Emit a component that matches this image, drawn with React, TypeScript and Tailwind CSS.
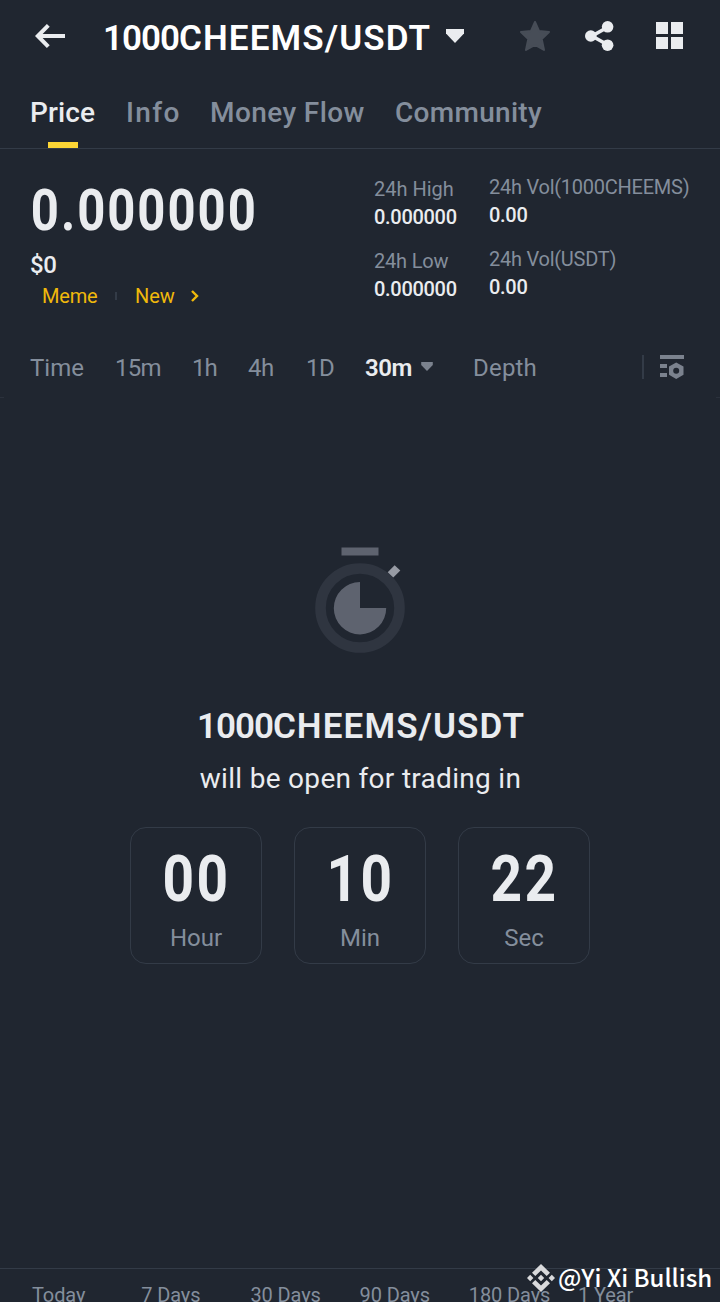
import type { ReactNode } from "react";

const TABS = [
  { label: "Price", box: "w-[96px]", text: "w-[66px] tracking-[0.1px]", active: true },
  { label: "Info", box: "w-[84px]", text: "tracking-[1.4px]" },
  { label: "Money Flow", box: "w-[185px]", text: "tracking-[0.4px]" },
  { label: "Community", box: "w-[160px]", text: "tracking-[0.3px]" },
];

const INTERVALS = [
  { label: "Time", box: "w-[85px]" },
  { label: "15m", box: "w-[77px] tracking-[-0.8px]" },
  { label: "1h", box: "w-[56px] tracking-[-0.9px]" },
  { label: "4h", box: "w-[58px] tracking-[-0.5px]" },
  { label: "1D", box: "w-[59px] tracking-[-0.5px]" },
];

const COUNTDOWN = [
  { value: "00", unit: "Hour" },
  { value: "10", unit: "Min" },
  { value: "22", unit: "Sec" },
];

const PERIODS = ["Today", "7 Days", "30 Days", "90 Days", "180 Days", "1 Year"];

function Caret({ className }: { className: string }) {
  return (
    <svg viewBox="0 0 18 14" className={className} fill="currentColor" aria-hidden>
      <path d="M0 0h18v4.6L9 14 0 4.6z" />
    </svg>
  );
}

// Digits sit tighter than the letters in the pair name
function Pair() {
  return (
    <>
      <span className="tracking-[-1px]">1000</span>
      <span className="tracking-[1.1px]">CHEEMS/USDT</span>
    </>
  );
}

function Header() {
  return (
    <header className="flex h-[75px] items-center pb-[3px] pl-[35px]">
      <svg viewBox="0 0 30 24" className="h-6 w-[30px] text-[#eaecef]" fill="none" stroke="currentColor" strokeWidth="4" aria-hidden>
        <path d="M30 12H3M13.3 1.4 2.8 12l10.5 10.6" />
      </svg>
      <h1 className="ml-[38px] mt-[5px] w-[343px] whitespace-nowrap text-[35px] font-semibold leading-[40px] text-white">
        <Pair />
      </h1>
      <Caret className="h-3.5 w-[18px] text-[#eaecef]" />
      <svg viewBox="0 0 30 30" className="ml-14 size-[30px] text-[#474d57]" fill="currentColor" stroke="currentColor" strokeWidth="2" strokeLinejoin="round" aria-hidden>
        <path d="m15 1 4.1 9.1 9.9.9-7.3 7 2.3 11-9-5-9 5 2.3-11L1 11l9.9-.9z" />
      </svg>
      <svg viewBox="0 0 30 30" className="ml-[35px] size-[30px] text-[#eaecef]" fill="currentColor" stroke="currentColor" aria-hidden>
        <path d="M23 6 7 15l16 9" fill="none" strokeWidth="3.6" />
        <g stroke="none">
          <circle cx="22.6" cy="5.8" r="5.8" />
          <circle cx="5.8" cy="15" r="5.8" />
          <circle cx="22.6" cy="24.2" r="5.8" />
        </g>
      </svg>
      <div className="mb-px ml-[41px] grid grid-cols-2 gap-[3px]">
        {[0, 1, 2, 3].map((i) => (
          <div key={i} className="size-3 bg-[#eaecef]" />
        ))}
      </div>
    </header>
  );
}

function Tabs() {
  return (
    <nav className="flex h-[74px] border-b border-[#333b47] pl-[30px] text-[28px] font-medium text-[#848e9c]">
      {TABS.map((tab) => (
        <div key={tab.label} className={`flex flex-col items-start ${tab.box}`}>
          <span className={`flex h-[67px] items-center whitespace-nowrap pt-[9px] ${tab.text} ${tab.active ? "text-[#eaecef]" : ""}`}>
            {tab.label}
          </span>
          {tab.active && <div className="ml-[18px] h-1.5 w-[30px] bg-[#fcd535]" />}
        </div>
      ))}
    </nav>
  );
}

function Stat({ label, value, className = "" }: { label: string; value: string; className?: string }) {
  return (
    <div className="h-[72px] whitespace-nowrap">
      <div className={`text-[20px] leading-7 text-[#848e9c] ${className}`}>{label}</div>
      <div className="text-[20px] font-medium leading-7 tracking-[-0.3px] text-[#eaecef]">{value}</div>
    </div>
  );
}

function Ticker() {
  return (
    <section className="flex h-[185px] pl-[30px]">
      <div className="w-[344px] pt-[31px]">
        <div className="origin-left scale-x-[0.86] pl-px text-[57px] font-bold leading-[62px] tracking-[2.3px] text-[#eaecef]">0.000000</div>
        <div className="mt-[7px] text-[24px] font-medium leading-8 tracking-[-0.5px] text-[#eaecef]">$0</div>
        <div className="-mt-px flex h-8 items-center pl-3 text-[20px] tracking-[-0.2px] text-[#f0b90b]">
          <span className="w-[73px]">Meme</span>
          <div className="h-2 w-0.5 bg-[#333b47]" />
          <span className="ml-[18px] w-[56px] tracking-normal">New</span>
          <svg viewBox="0 0 8 12" className="h-3 w-2" fill="none" stroke="currentColor" strokeWidth="2.4" aria-hidden>
            <path d="m1 1 5 5-5 5" />
          </svg>
        </div>
      </div>
      <div className="w-[115px] pt-[26px]">
        <Stat label="24h High" value="0.000000" />
        <Stat label="24h Low" value="0.000000" className="tracking-[-0.2px]" />
      </div>
      <div className="pt-[23.5px]">
        <Stat label="24h Vol(1000CHEEMS)" value="0.00" className="tracking-[-0.25px]" />
        <Stat label="24h Vol(USDT)" value="0.00" className="tracking-[-0.25px]" />
      </div>
    </section>
  );
}

function IntervalBar() {
  return (
    <div className="flex h-[66px] items-center pl-[30px] text-[24px] text-[#848e9c]">
      <div className="flex pt-0.5 leading-8">
        {INTERVALS.map((item) => (
          <span key={item.label} className={item.box}>
            {item.label}
          </span>
        ))}
        <span className="w-[56px] font-semibold tracking-[-0.4px] text-[#eaecef]">30m</span>
      </div>
      <Caret className="mb-[2px] h-[9px] w-3 text-[#7b828e]" />
      <span className="ml-10 w-[169px] pt-0.5 leading-8 tracking-[0.2px]">Depth</span>
      <div className="h-6 w-0.5 bg-[#333b47]" />
      <svg viewBox="0 0 24 24" className="ml-4 size-6 text-[#7b828e]" fill="currentColor" aria-hidden>
        <path d="M0 0h24v4H0zM0 9h7v4H0zM0 18h7v4H0z" />
        <path fillRule="evenodd" d="m16.2 7.5 7.3 4.1v8.2L16.2 24 9 19.8v-8.2zM16.2 12.8a3 3 0 1 0 0 6 3 3 0 0 0 0-6z" />
      </svg>
    </div>
  );
}

function Stopwatch() {
  return (
    <svg viewBox="0 0 90 106" className="h-[106px] w-[90px]" aria-hidden>
      <path d="M26.5 0.5h37v8h-37z" fill="#5e636f" />
      <circle cx="45" cy="61" r="39.5" fill="none" stroke="#2f3540" strokeWidth="10.6" />
      <path d="M45 61V35a26.2 26.2 0 1 0 26.2 26z" fill="#5e636f" />
      <path d="m72.7 25.3 6.9-7 5.7 5.3-7 7z" fill="#979ba4" />
    </svg>
  );
}

function Box({ children }: { children: ReactNode }) {
  return (
    <div className="flex h-[137px] w-[132px] flex-col items-center rounded-2xl border border-[#333b47] pt-[16px]">
      {children}
    </div>
  );
}

function Opening() {
  return (
    <main className="flex h-[868px] flex-col items-center">
      {/* chart edge ticks */}
      <div className="flex h-[147px] w-full justify-between">
        <div className="h-px w-1 -translate-y-[3px] bg-[#2b313c]" />
        <div className="h-px w-1 -translate-y-[3px] bg-[#2b313c]" />
      </div>
      <Stopwatch />
      <h2 className="mt-[54px] whitespace-nowrap pl-0.5 text-[35px] font-semibold leading-[40px] text-[#eaecef]">
        <Pair />
      </h2>
      <p className="mt-3 whitespace-nowrap pl-px text-[28px] leading-[40px] tracking-[0.3px] text-[#eaecef]">will be open for trading in</p>
      <div className="mt-[28px] flex gap-8">
        {COUNTDOWN.map((item) => (
          <Box key={item.unit}>
            <div className="scale-x-[0.86] pl-0.5 text-[64px] font-bold leading-[72px] tracking-[2.8px] text-[#eaecef]">{item.value}</div>
            <div className="mt-[6px] text-[24px] leading-8 text-[#848e9c]">{item.unit}</div>
          </Box>
        ))}
      </div>
    </main>
  );
}

function Watermark() {
  return (
    <div className="absolute left-[527px] top-[1260px] flex h-9 items-center whitespace-nowrap">
      <svg viewBox="0 0 28 28" className="size-7 text-[#d9dadc]" fill="currentColor" aria-hidden>
        <path d="m14 0 9 8.8-3.3 3.2L14 6.4 8.3 12 5 8.8zM14 28l9-8.8-3.3-3.2-5.7 5.6L8.3 16 5 19.2zM14 10.8l3.2 3.2-3.2 3.2-3.2-3.2zM3.2 10.8 6.4 14l-3.2 3.2L0 14zM24.8 10.8 28 14l-3.2 3.2-3.2-3.2z" />
      </svg>
      <span className="mb-0.5 ml-[3px] font-['Noto_Sans_CJK_SC',sans-serif] text-[24px] font-medium leading-9 text-white">@Yi Xi Bullish</span>
    </div>
  );
}

export default function App() {
  return (
    <div className="relative h-[1302px] w-full overflow-hidden bg-[#202630] font-[Roboto,sans-serif]">
      <Header />
      <Tabs />
      <Ticker />
      <IntervalBar />
      <Opening />
      <footer className="flex h-[34px] border-t border-[#333b47] pl-8 text-[20px] text-[#848e9c]">
        {PERIODS.map((period) => (
          <span key={period} className="w-[109.2px] shrink-0 pt-[11px] tracking-[-0.1px]">
            {period}
          </span>
        ))}
      </footer>
      <Watermark />
    </div>
  );
}
